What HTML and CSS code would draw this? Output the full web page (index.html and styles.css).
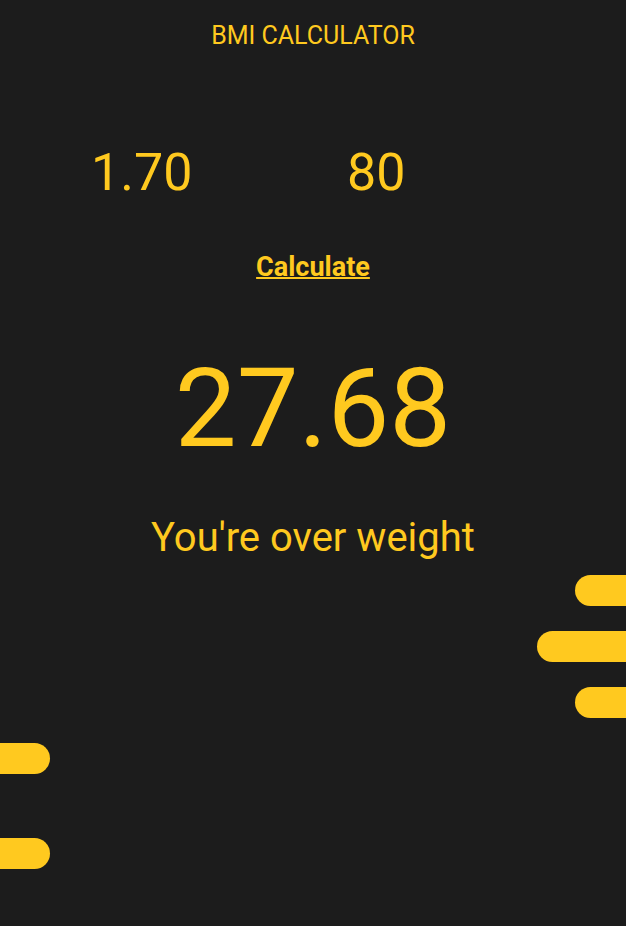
FILE: index.html
```html
<!DOCTYPE html>
<html>
<head>
  <title>BMI Calculator</title>
  <link rel="stylesheet" href="styles.css">
</head>
<body>
  <div class="app">
    <h1 class="title">BMI CALCULATOR</h1>

    <div class="inputs">
      <input type="text" class="field" value="1.70">
      <input type="text" class="field" value="80">
    </div>

    <div class="action">
      <a href="#" class="calc-link">Calculate</a>
    </div>

    <div class="result">27.68</div>
    <div class="message">You're over weight</div>

    <div class="decor">
      <div class="bar bar-right"></div>
      <div class="bar bar-right long"></div>
      <div class="bar bar-right"></div>
      <div class="bar bar-left"></div>
      <div class="bar bar-left gap"></div>
    </div>
  </div>
</body>
</html>
```

FILE: styles.css
```css
html, body {
  margin: 0;
  padding: 0;
  background-color: #1c1c1c;
}

.app {
  width: 626px;
  height: 926px;
  overflow: hidden;
  display: flex;
  flex-direction: column;
  font-family: Roboto, "Liberation Sans", sans-serif;
  color: #ffc91f;
}

.title {
  margin: 21px 0 0 0;
  font-size: 25px;
  line-height: 30px;
  font-weight: 400;
  text-align: center;
}

.inputs {
  display: grid;
  grid-template-columns: 256px 200px;
  padding-left: 91px;
  margin-top: 90px;
}

.field {
  background: transparent;
  border: none;
  outline: none;
  padding: 0;
  margin: 0;
  height: 64px;
  font-family: Roboto, "Liberation Sans", sans-serif;
  font-size: 52px;
  line-height: 64px;
  color: #ffc91f;
  width: 100%;
}

.action {
  margin-top: 47px;
  text-align: center;
  font-size: 27px;
  line-height: 30px;
  height: 30px;
}

.calc-link {
  font-weight: 700;
  color: #ffc91f;
  text-decoration: underline;
  text-decoration-thickness: 2px;
}

.result {
  margin-top: 67px;
  font-size: 110px;
  line-height: 120px;
  text-align: center;
}

.message {
  margin-top: 45px;
  font-size: 40px;
  line-height: 48px;
  text-align: center;
}

.decor {
  display: flex;
  flex-direction: column;
  margin-top: 13px;
}

.bar {
  height: 31px;
  background-color: #ffc91f;
  margin-bottom: 25px;
}

.bar-right {
  align-self: flex-end;
  width: 51px;
  border-radius: 16px 0 0 16px;
}

.bar-right.long {
  width: 89px;
}

.bar-left {
  align-self: flex-start;
  width: 50px;
  border-radius: 0 16px 16px 0;
}

.bar-left.gap {
  margin-top: 39px;
}
```
